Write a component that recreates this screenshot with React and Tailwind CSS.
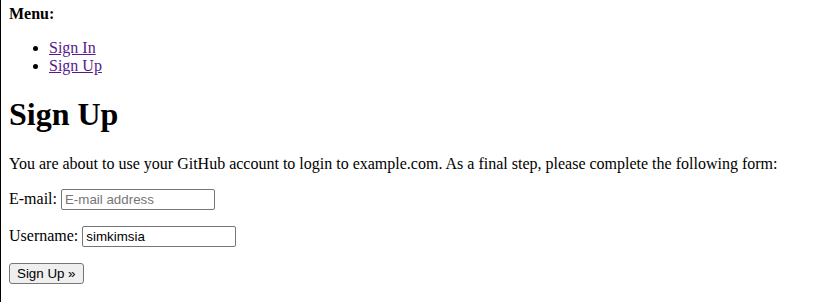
export default function App() {
  const field =
    "align-baseline border border-[#767676] rounded-[2px] px-[3px] py-[1px] w-[154px] h-[21px] text-[13.33px] leading-[normal] text-black bg-white placeholder:text-[#757575] outline-none";

  return (
    <div
      className="min-h-[302px] border-l border-black bg-white pl-[8px] pt-[5px] text-[16px] leading-[normal] text-black"
      style={{ fontFamily: '"Liberation Serif", "Times New Roman", serif' }}
    >
      <div>
        <strong>Menu:</strong>
      </div>
      <ul className="my-4 pl-10 list-disc">
        <li>
          <a href="#" className="text-[#551a8b] underline">Sign In</a>
        </li>
        <li>
          <a href="#" className="text-[#551a8b] underline">Sign Up</a>
        </li>
      </ul>

      <h1 className="my-[21.44px] text-[32px] font-bold leading-[normal]">Sign Up</h1>

      <p className="my-4">
        You are about to use your GitHub account to login to example.com. As a final step, please complete the following form:
      </p>

      <form>
        <p className="my-4">
          <label>E-mail: </label>
          <input
            type="email"
            placeholder="E-mail address"
            className={field}
            style={{ fontFamily: '"Liberation Sans", Arial, sans-serif' }}
          />
        </p>
        <p className="my-4">
          <label>Username: </label>
          <input
            type="text"
            defaultValue="simkimsia"
            className={field}
            style={{ fontFamily: '"Liberation Sans", Arial, sans-serif' }}
          />
        </p>
        <button
          type="submit"
          className="h-[21px] px-[7px] border border-[#767676] rounded-[3px] bg-[#efefef] text-[13.33px] leading-[normal] text-black"
          style={{ fontFamily: '"Liberation Sans", Arial, sans-serif' }}
        >
          Sign Up »
        </button>
      </form>
    </div>
  );
}
